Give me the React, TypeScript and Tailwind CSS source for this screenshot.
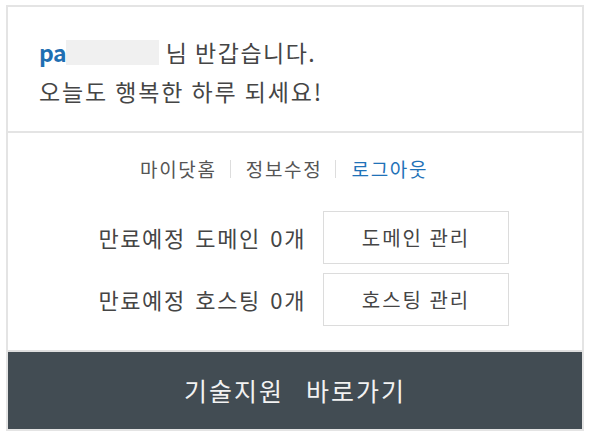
import React from "react";

const font = { fontFamily: '"Malgun Gothic", "Noto Sans CJK KR", "Noto Sans", sans-serif' };

export default function App() {
  return (
    <div className="w-[590px] h-[433px] bg-white pt-[5px] pl-[6px]" style={font}>
      <div className="w-[578px] border-2 border-[#e4e4e4] bg-white flex flex-col">
        <div className="pt-[26px] pb-[20px] pl-[31px] text-[23px] leading-[39px] text-[#454545] border-b-2 border-[#e4e4e4]">
          <div className="flex items-center whitespace-pre">
            <span className="font-bold text-[#1f6fb2] tracking-[-0.5px]">pa</span>
            <span className="inline-block w-[93px] h-[25px] bg-[#f0f0f0]" />
            <span className="tracking-[1.5px]"> 님 반갑습니다.</span>
          </div>
          <div className="tracking-[1.9px]">오늘도 행복한 하루 되세요!</div>
        </div>
        <div className="pt-[24px] pb-[24px]">
          <div className="flex items-center pl-[132px] text-[19px] leading-[24px] tracking-[1.7px] text-[#555555]">
            <span>마이닷홈</span>
            <span className="ml-[13px] mr-[15px] w-px h-[18px] bg-[#dddddd]" />
            <span>정보수정</span>
            <span className="ml-[13px] mr-[15px] w-px h-[18px] bg-[#dddddd]" />
            <span className="text-[#1f72b8]">로그아웃</span>
          </div>
          <div className="mt-[30px] flex flex-col gap-[9px] items-end pr-[73px]">
            <div className="flex items-center">
              <span className="text-[22px] text-[#454545] mr-[17px] tracking-[1.6px] [word-spacing:3px]">만료예정 도메인 0개</span>
              <button className="w-[186px] h-[53px] border border-[#dcdcdc] bg-white text-[20px] tracking-[2px] text-[#454545]">도메인 관리</button>
            </div>
            <div className="flex items-center">
              <span className="text-[22px] text-[#454545] mr-[17px] tracking-[1.6px] [word-spacing:3px]">만료예정 호스팅 0개</span>
              <button className="w-[186px] h-[53px] border border-[#dcdcdc] bg-white text-[20px] tracking-[2px] text-[#454545]">호스팅 관리</button>
            </div>
          </div>
        </div>
        <div className="border-t-2 border-[#dedede] h-[79px] bg-[#424c53] flex items-center justify-center gap-[22px] text-[25px] tracking-[2px] text-[#f2f2f2]">
          <span>기술지원</span>
          <span>바로가기</span>
        </div>
      </div>
    </div>
  );
}
